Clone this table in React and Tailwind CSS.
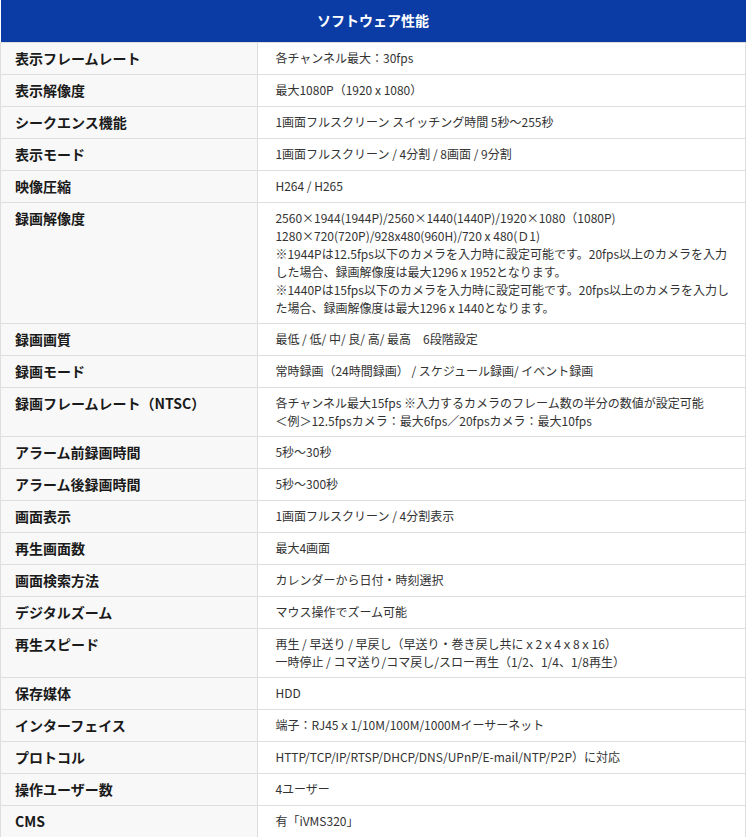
import React from 'react';

const rows = [
  { label: '表示フレームレート', lines: ['各チャンネル最大：30fps'] },
  { label: '表示解像度', lines: ['最大1080P（1920 x 1080）'] },
  { label: 'シークエンス機能', lines: ['1画面フルスクリーン スイッチング時間 5秒～255秒'] },
  { label: '表示モード', lines: ['1画面フルスクリーン / 4分割 / 8画面 / 9分割'] },
  { label: '映像圧縮', lines: ['H264 / H265'] },
  {
    label: '録画解像度',
    lines: [
      '2560×1944(1944P)/2560×1440(1440P)/1920×1080（1080P)',
      '1280×720(720P)/928x480(960H)/720 x 480(Ｄ1)',
      '※1944Pは12.5fps以下のカメラを入力時に設定可能です。20fps以上のカメラを入力',
      'した場合、録画解像度は最大1296 x 1952となります。',
      '※1440Pは15fps以下のカメラを入力時に設定可能です。20fps以上のカメラを入力し',
      'た場合、録画解像度は最大1296 x 1440となります。',
    ],
  },
  { label: '録画画質', lines: ['最低 / 低/ 中/ 良/ 高/ 最高　6段階設定'] },
  { label: '録画モード', lines: ['常時録画（24時間録画） / スケジュール録画/ イベント録画'] },
  {
    label: '録画フレームレート（NTSC）',
    lines: [
      '各チャンネル最大15fps ※入力するカメラのフレーム数の半分の数値が設定可能',
      '＜例＞12.5fpsカメラ：最大6fps／20fpsカメラ：最大10fps',
    ],
  },
  { label: 'アラーム前録画時間', lines: ['5秒～30秒'] },
  { label: 'アラーム後録画時間', lines: ['5秒～300秒'] },
  { label: '画面表示', lines: ['1画面フルスクリーン / 4分割表示'] },
  { label: '再生画面数', lines: ['最大4画面'] },
  { label: '画面検索方法', lines: ['カレンダーから日付・時刻選択'] },
  { label: 'デジタルズーム', lines: ['マウス操作でズーム可能'] },
  {
    label: '再生スピード',
    lines: [
      '再生 / 早送り / 早戻し（早送り・巻き戻し共にｘ2ｘ4ｘ8ｘ16）',
      '一時停止 / コマ送り/コマ戻し/スロー再生（1/2、1/4、1/8再生）',
    ],
  },
  { label: '保存媒体', lines: ['HDD'] },
  { label: 'インターフェイス', lines: ['端子：RJ45ｘ1/10M/100M/1000Mイーサーネット'] },
  { label: 'プロトコル', lines: ['HTTP/TCP/IP/RTSP/DHCP/DNS/UPnP/E-mail/NTP/P2P）に対応'] },
  { label: '操作ユーザー数', lines: ['4ユーザー'] },
  { label: 'CMS', lines: ['有「iVMS320」'] },
];

export default function App() {
  return (
    <div className="w-[750px] bg-white font-['Noto_Sans_CJK_JP','Noto_Sans',sans-serif]">
      <table className="w-[746px] border-collapse">
        <thead>
          <tr>
            <th
              colSpan={2}
              className="h-[42px] bg-[#0b3ca6] text-center text-[14px] font-bold text-white"
            >
              ソフトウェア性能
            </th>
          </tr>
        </thead>
        <tbody>
          {rows.map((row) => (
            <tr key={row.label}>
              {/* Label */}
              <td className="w-[262px] border border-[#dedede] bg-[#f8f8f8] pl-[14px] pr-4 pt-[6px] pb-[6px] align-top text-[14px] font-bold leading-[19px] text-[#1a1a1a]">
                {row.label}
              </td>
              {/* Value */}
              <td className="border border-[#dedede] pl-[17px] pr-4 pt-[6px] pb-[6px] align-top text-[12px] leading-[18px] text-[#333]">
                {row.lines.map((line, i) => (
                  <div key={i} className="whitespace-nowrap">
                    {line}
                  </div>
                ))}
              </td>
            </tr>
          ))}
        </tbody>
      </table>
    </div>
  );
}
